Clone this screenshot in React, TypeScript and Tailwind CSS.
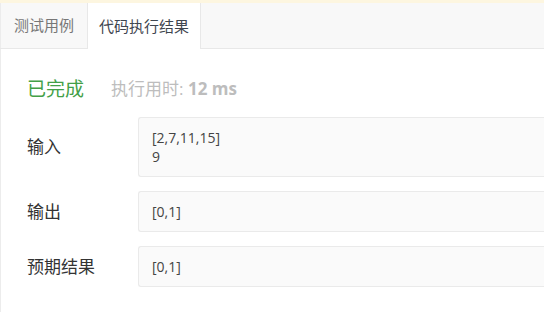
const rows = [
  { label: '输入', lines: ['[2,7,11,15]', '9'] },
  { label: '输出', lines: ['[0,1]'] },
  { label: '预期结果', lines: ['[0,1]'] }
];

const font = { fontFamily: '"Open Sans", "Noto Sans CJK SC", sans-serif' };

export default function App() {
  return (
    <div className="h-[312px] w-[544px] overflow-hidden bg-white" style={font}>
      <div className="h-[3px] bg-[#fdf6e0]" />
      <div className="flex h-[46px] border-b border-[#e8e8e8] bg-[#f8f8f8]">
        <div className="flex w-[87px] items-center justify-center border-l border-[#ececec] text-[15px] text-[#777]">
          测试用例
        </div>
        <div className="-mb-px flex w-[114px] items-center justify-center border-x border-[#e8e8e8] bg-white text-[15px] text-[#3f4650]">
          代码执行结果
        </div>
      </div>
      <div className="h-[263px] border-l border-[#ececec] pl-[26px] pr-0">
        <div className="flex h-[68px] items-center gap-[27px] pt-[11px]">
          <span className="text-[19px] leading-[24px] text-[#43a047]">已完成</span>
          <span className="text-[17px] leading-[24px] text-[#bdbdbd]">
            执行用时: <span className="font-bold">12 ms</span>
          </span>
        </div>
        <div className="flex flex-col gap-[14px]">
          {rows.map((row) => (
            <div key={row.label} className="flex items-center">
              <div className="w-[111px] text-[17px] text-[#333]">{row.label}</div>
              <div className="flex-1 rounded-[3px] rounded-r-none border border-r-0 border-[#eaeaea] bg-[#fafafa] py-[10px] pl-[13px] text-[14px] leading-[19px] text-[#444]">
                {row.lines.map((line) => (
                  <div key={line}>{line}</div>
                ))}
              </div>
            </div>
          ))}
        </div>
      </div>
    </div>
  );
}
